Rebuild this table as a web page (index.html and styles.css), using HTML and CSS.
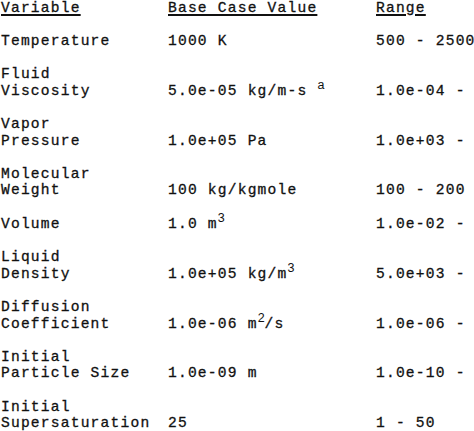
FILE: index.html
```html
<!DOCTYPE html>
<html>
<head>
<meta charset="utf-8">
<link rel="stylesheet" href="styles.css">
</head>
<body>
<div class="table">
  <div class="cell head"><span class="ul">Variable</span></div>
  <div class="cell head"><span class="ul">Base Case Value</span></div>
  <div class="cell head"><span class="ul">Range</span></div>

  <div class="cell var">Temperature</div>
  <div class="cell">1000 K</div>
  <div class="cell">500 - 2500</div>

  <div class="cell var">Fluid<br>Viscosity</div>
  <div class="cell">5.0e-05 kg/m-s <span class="sup">a</span></div>
  <div class="cell">1.0e-04 -</div>

  <div class="cell var">Vapor<br>Pressure</div>
  <div class="cell">1.0e+05 Pa</div>
  <div class="cell">1.0e+03 -</div>

  <div class="cell var">Molecular<br>Weight</div>
  <div class="cell">100 kg/kgmole</div>
  <div class="cell">100 - 200</div>

  <div class="cell var">Volume</div>
  <div class="cell">1.0 m<span class="sup">3</span></div>
  <div class="cell">1.0e-02 -</div>

  <div class="cell var">Liquid<br>Density</div>
  <div class="cell">1.0e+05 kg/m<span class="sup">3</span></div>
  <div class="cell">5.0e+03 -</div>

  <div class="cell var">Diffusion<br>Coefficient</div>
  <div class="cell">1.0e-06 m<span class="sup">2</span>/s</div>
  <div class="cell">1.0e-06 -</div>

  <div class="cell var">Initial<br>Particle Size</div>
  <div class="cell">1.0e-09 m</div>
  <div class="cell">1.0e-10 -</div>

  <div class="cell var">Initial<br>Supersaturation</div>
  <div class="cell">25</div>
  <div class="cell">1 - 50</div>
</div>
</body>
</html>
```
FILE: styles.css
```css
html, body {
  margin: 0;
  padding: 0;
  background: #ffffff;
  overflow: hidden;
}

body {
  font-family: "Courier New", "Liberation Mono", monospace;
  font-size: 14.6px;
  letter-spacing: 1.2px;
  line-height: 16.64px;
  color: #111111;
  white-space: nowrap;
  -webkit-text-stroke: 0.3px #111111;
}

.table {
  display: grid;
  grid-template-columns: 167px 208px 1fr;
  row-gap: 16.64px;
  align-items: end;
  margin-top: -0.5px;
  padding-left: 1px;
}

.ul {
  text-decoration: underline;
  text-decoration-thickness: 1.5px;
  text-underline-offset: 2px;
}

.sup {
  font-family: "Liberation Sans", Arial, sans-serif;
  font-size: 12.5px;
  letter-spacing: 0;
  line-height: 0;
  vertical-align: 6px;
  -webkit-text-stroke: 0;
}
```
